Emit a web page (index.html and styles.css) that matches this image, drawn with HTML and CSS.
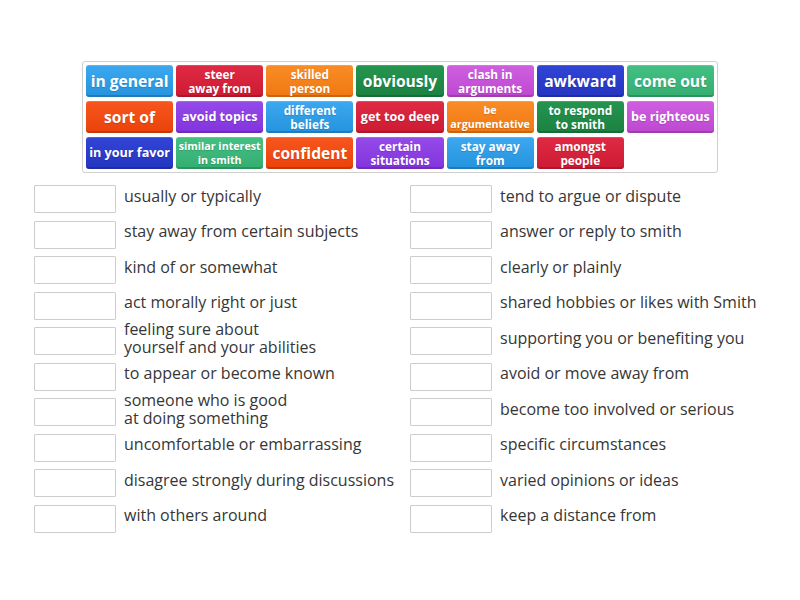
FILE: index.html
```html
<!DOCTYPE html>
<html lang="en">
<head>
<meta charset="utf-8">
<title>Match up</title>
<link rel="stylesheet" href="styles.css">
</head>
<body>
<div class="panel">
  <div class="tile blue s16">in general</div>
  <div class="tile red s12">steer<br>away from</div>
  <div class="tile orange s12">skilled<br>person</div>
  <div class="tile dkgreen s16">obviously</div>
  <div class="tile pink s12">clash in<br>arguments</div>
  <div class="tile navy s16">awkward</div>
  <div class="tile teal s16">come out</div>

  <div class="tile redorange s16">sort of</div>
  <div class="tile purple s13">avoid topics</div>
  <div class="tile blue s12">different<br>beliefs</div>
  <div class="tile red s13">get too deep</div>
  <div class="tile orange s11">be<br>argumentative</div>
  <div class="tile dkgreen s12">to respond<br>to smith</div>
  <div class="tile pink s13">be righteous</div>

  <div class="tile navy s13">in your favor</div>
  <div class="tile teal s11">similar interest<br>in smith</div>
  <div class="tile redorange s16">confident</div>
  <div class="tile purple s12">certain<br>situations</div>
  <div class="tile blue s12">stay away<br>from</div>
  <div class="tile red s12">amongst<br>people</div>
</div>

<div class="list">
  <div class="col">
    <div class="item"><div class="slot"></div><div class="text">usually or typically</div></div>
    <div class="item"><div class="slot"></div><div class="text">stay away from certain subjects</div></div>
    <div class="item"><div class="slot"></div><div class="text">kind of or somewhat</div></div>
    <div class="item"><div class="slot"></div><div class="text">act morally right or just</div></div>
    <div class="item"><div class="slot"></div><div class="text">feeling sure about<br>yourself and your abilities</div></div>
    <div class="item"><div class="slot"></div><div class="text">to appear or become known</div></div>
    <div class="item"><div class="slot"></div><div class="text">someone who is good<br>at doing something</div></div>
    <div class="item"><div class="slot"></div><div class="text">uncomfortable or embarrassing</div></div>
    <div class="item"><div class="slot"></div><div class="text">disagree strongly during discussions</div></div>
    <div class="item"><div class="slot"></div><div class="text">with others around</div></div>
  </div>
  <div class="col">
    <div class="item"><div class="slot"></div><div class="text">tend to argue or dispute</div></div>
    <div class="item"><div class="slot"></div><div class="text">answer or reply to smith</div></div>
    <div class="item"><div class="slot"></div><div class="text">clearly or plainly</div></div>
    <div class="item"><div class="slot"></div><div class="text">shared hobbies or likes with Smith</div></div>
    <div class="item"><div class="slot"></div><div class="text">supporting you or benefiting you</div></div>
    <div class="item"><div class="slot"></div><div class="text">avoid or move away from</div></div>
    <div class="item"><div class="slot"></div><div class="text">become too involved or serious</div></div>
    <div class="item"><div class="slot"></div><div class="text">specific circumstances</div></div>
    <div class="item"><div class="slot"></div><div class="text">varied opinions or ideas</div></div>
    <div class="item"><div class="slot"></div><div class="text">keep a distance from</div></div>
  </div>
</div>
</body>
</html>
```

FILE: styles.css
```css
html, body {
  margin: 0;
  padding: 0;
  background: #ffffff;
}

body {
  font-family: "Open Sans", "Noto Sans", sans-serif;
  color: #333333;
}

.panel {
  box-sizing: border-box;
  margin: 61px 0 0 82px;
  width: 636px;
  border: 1px solid #cfcfcf;
  border-radius: 3px;
  padding: 3px;
  display: grid;
  grid-template-columns: repeat(7, 1fr);
  grid-auto-rows: 32px;
  column-gap: 3px;
  row-gap: 4px;
}

.tile {
  display: flex;
  align-items: center;
  justify-content: center;
  text-align: center;
  color: #ffffff;
  font-weight: 700;
  border-radius: 3px;
  white-space: nowrap;
  overflow: hidden;
  box-shadow: inset 0 -2px 0 rgba(0, 0, 0, 0.16), inset 0 1px 0 rgba(255, 255, 255, 0.15);
  text-shadow: 0 1px 1px rgba(0, 0, 0, 0.15);
}

.s16 { font-size: 15.6px; line-height: 20px; }
.s13 { font-size: 12.6px; line-height: 16px; }
.s12 { font-size: 11.8px; line-height: 14px; }
.s11 { font-size: 10.7px; line-height: 14px; }

.blue      { background: linear-gradient(#3ba8ef, #2593de); }
.red       { background: linear-gradient(#e02a44, #cc1b33); }
.orange    { background: linear-gradient(#fa8c26, #f07812); }
.dkgreen   { background: linear-gradient(#25954f, #1b8142); }
.pink      { background: linear-gradient(#cf5fe0, #bd48d0); }
.navy      { background: linear-gradient(#3144d4, #2535c2); }
.teal      { background: linear-gradient(#44c083, #34ad71); }
.redorange { background: linear-gradient(#f7561d, #ea420b); }
.purple    { background: linear-gradient(#954aea, #8234dc); }

.list {
  margin: 12px 0 0 34px;
  display: grid;
  grid-template-columns: 376px auto;
}

.col {
  display: flex;
  flex-direction: column;
  gap: 7.5px;
}

.item {
  display: flex;
  align-items: center;
  height: 28px;
}

.slot {
  box-sizing: border-box;
  flex: 0 0 82px;
  height: 28px;
  border: 1px solid #cdcdcd;
  border-radius: 1px;
  background: #ffffff;
  margin-right: 8px;
}

.text {
  font-size: 16px;
  line-height: 18px;
  color: #363636;
  white-space: nowrap;
  margin-bottom: 7px;
}
```
